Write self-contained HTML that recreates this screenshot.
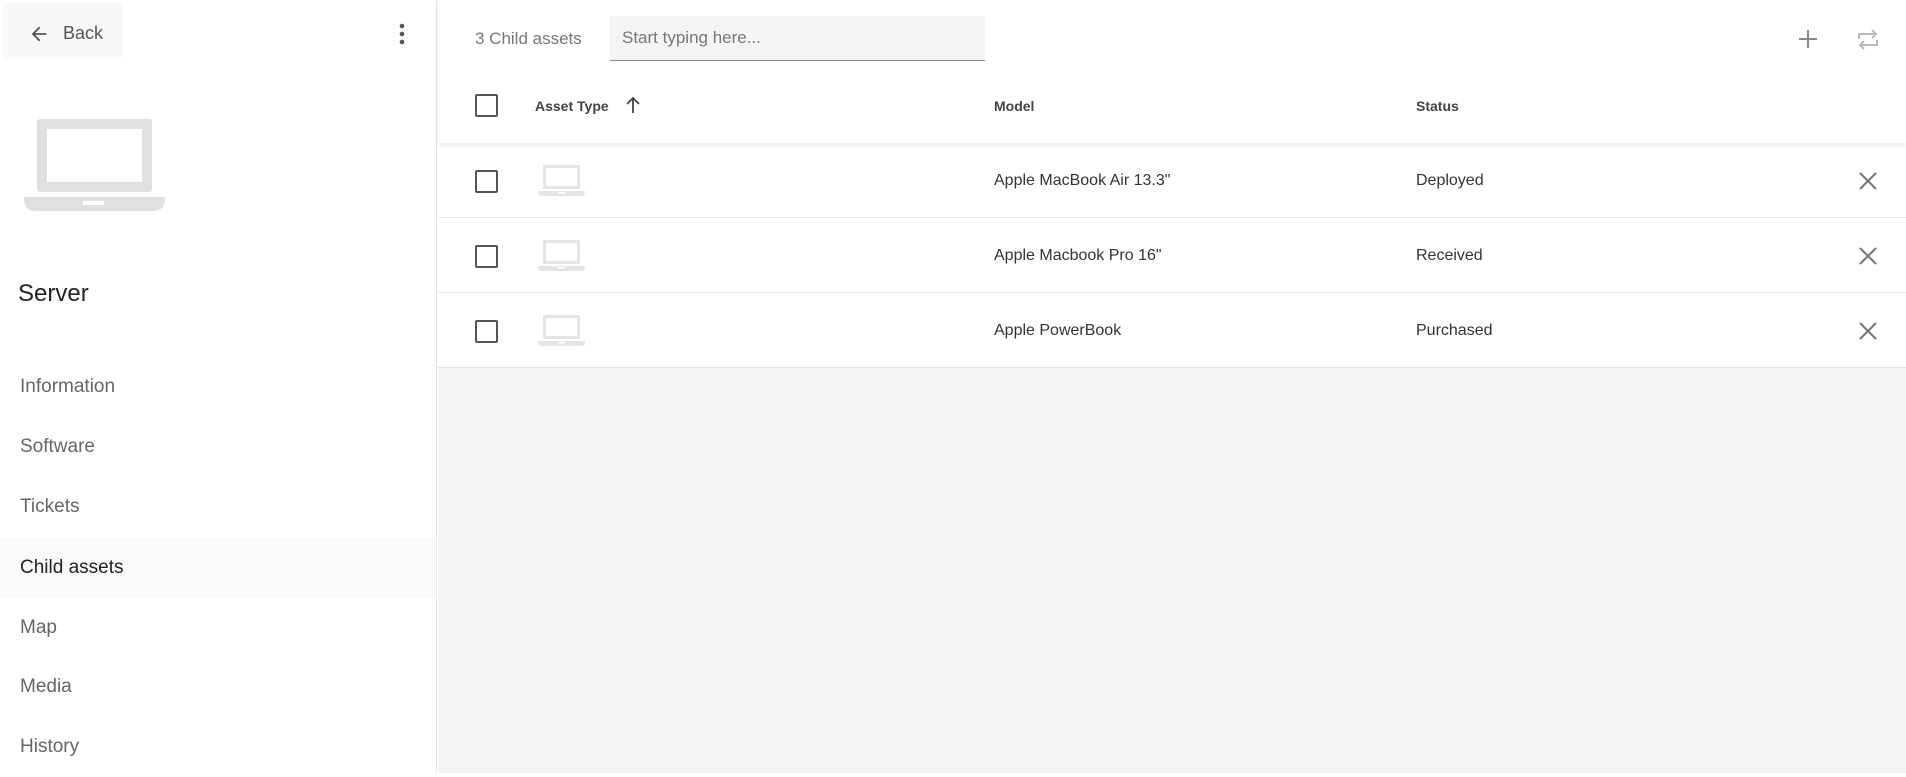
<!DOCTYPE html>
<html><head><meta charset="utf-8"><style>
*{box-sizing:border-box;margin:0;padding:0}
body{width:1906px;height:773px;overflow:hidden;font-family:"Liberation Sans",sans-serif;background:#fff;position:relative}
.side{position:absolute;left:0;top:0;width:437px;height:773px;background:#fff;border-right:1px solid #e6e6e6}
.back{position:absolute;left:3px;top:3px;width:120px;height:55px;background:#f8f8f8;border-radius:3px}
.back span{position:absolute;left:60px;top:20px;font-size:18px;color:#555}
.nav{position:absolute;left:0;width:436px;height:60px;font-size:19px;color:#666;padding-left:20px;line-height:60px}
.main{position:absolute;left:438px;top:0;width:1468px;height:773px;background:#f4f4f4}
.top{position:absolute;left:0;top:0;width:1468px;height:143px;background:#fff;box-shadow:0 3px 5px rgba(0,0,0,.08)}
.row{position:absolute;left:0;width:1468px;height:75px;background:#fff;border-bottom:1px solid #e4e4e4}
.cb{position:absolute;left:37px;width:23px;height:23px;border:2px solid #555;border-radius:2px}
.txt{position:absolute;font-size:16px;color:#333}
.hd{position:absolute;font-size:14px;font-weight:bold;color:#444;top:98px}
</style></head><body>
<div class="side">
 <div class="back">
  <svg style="position:absolute;left:25px;top:20px" width="22" height="22" viewBox="0 0 24 24"><path d="M20 11H7.8l5.6-5.6L12 4l-8 8 8 8 1.4-1.4L7.8 13H20z" fill="#555"/></svg>
  <span>Back</span>
 </div>
 <svg style="position:absolute;left:396px;top:22px" width="12" height="24" viewBox="0 0 12 24"><circle cx="6" cy="4" r="2.3" fill="#555"/><circle cx="6" cy="12" r="2.3" fill="#555"/><circle cx="6" cy="20" r="2.3" fill="#555"/></svg>
 <svg style="position:absolute;left:24px;top:119px" width="141" height="93" viewBox="0 0 141 93">
  <rect x="13" y="0" width="115" height="73" rx="3" fill="#e0e0e0"/>
  <rect x="23" y="10" width="95" height="53" fill="#fff"/>
  <path d="M0 78H141V80Q141 92 129 92H12Q0 92 0 80Z" fill="#e0e0e0"/>
  <rect x="59" y="82" width="21" height="4" fill="#fff"/>
 </svg>
 <div style="position:absolute;left:18px;top:280px;font-size:24px;color:#222">Server</div>
 <div class="nav" style="top:357px">Information</div>
 <div class="nav" style="top:417px">Software</div>
 <div class="nav" style="top:477px">Tickets</div>
 <div class="nav" style="top:538px;background:#f9f9f9;color:#222">Child assets</div>
 <div class="nav" style="top:598px">Map</div>
 <div class="nav" style="top:657px">Media</div>
 <div class="nav" style="top:717px">History</div>
</div>
<div class="main">
 <div class="row" style="top:143px"><div class="cb" style="top:27px"></div>
  <svg style="position:absolute;left:100px;top:22px" width="47" height="31" viewBox="0 0 47 31"><rect x="5" y="0" width="37" height="24" rx="1" fill="#e4e4e4"/><rect x="8" y="3" width="31" height="18" fill="#fff"/><path d="M0 26H47V27Q47 31 43 31H4Q0 31 0 27Z" fill="#e4e4e4"/><rect x="20" y="27" width="7" height="1.5" fill="#fff"/></svg>
  <div class="txt" style="left:556px;top:29px">Apple MacBook Air 13.3"</div>
  <div class="txt" style="left:978px;top:29px">Deployed</div>
  <svg style="position:absolute;left:1421px;top:29px" width="18" height="18" viewBox="0 0 18 18"><path d="M1 1L17 17M17 1L1 17" stroke="#777" stroke-width="2"/></svg>
 </div>
 <div class="row" style="top:218px"><div class="cb" style="top:27px"></div>
  <svg style="position:absolute;left:100px;top:22px" width="47" height="31" viewBox="0 0 47 31"><rect x="5" y="0" width="37" height="24" rx="1" fill="#e4e4e4"/><rect x="8" y="3" width="31" height="18" fill="#fff"/><path d="M0 26H47V27Q47 31 43 31H4Q0 31 0 27Z" fill="#e4e4e4"/><rect x="20" y="27" width="7" height="1.5" fill="#fff"/></svg>
  <div class="txt" style="left:556px;top:29px">Apple Macbook Pro 16"</div>
  <div class="txt" style="left:978px;top:29px">Received</div>
  <svg style="position:absolute;left:1421px;top:29px" width="18" height="18" viewBox="0 0 18 18"><path d="M1 1L17 17M17 1L1 17" stroke="#777" stroke-width="2"/></svg>
 </div>
 <div class="row" style="top:293px"><div class="cb" style="top:27px"></div>
  <svg style="position:absolute;left:100px;top:22px" width="47" height="31" viewBox="0 0 47 31"><rect x="5" y="0" width="37" height="24" rx="1" fill="#e4e4e4"/><rect x="8" y="3" width="31" height="18" fill="#fff"/><path d="M0 26H47V27Q47 31 43 31H4Q0 31 0 27Z" fill="#e4e4e4"/><rect x="20" y="27" width="7" height="1.5" fill="#fff"/></svg>
  <div class="txt" style="left:556px;top:29px">Apple PowerBook</div>
  <div class="txt" style="left:978px;top:29px">Purchased</div>
  <svg style="position:absolute;left:1421px;top:29px" width="18" height="18" viewBox="0 0 18 18"><path d="M1 1L17 17M17 1L1 17" stroke="#777" stroke-width="2"/></svg>
 </div>
 <div class="top">
  <div style="position:absolute;left:37px;top:29px;font-size:17px;color:#777">3 Child assets</div>
  <div style="position:absolute;left:172px;top:16px;width:375px;height:45px;background:#f4f4f4;border-bottom:1px solid #888"></div>
  <div style="position:absolute;left:184px;top:28px;font-size:17px;color:#777">Start typing here...</div>
  <svg style="position:absolute;left:1361px;top:30px" width="18" height="18" viewBox="0 0 18 18"><path d="M9 0V18M0 9H18" stroke="#888" stroke-width="2"/></svg>
  <svg style="position:absolute;left:1418px;top:27px" width="24" height="25" viewBox="0 0 24 25"><path d="M3 12V7H19M16 3L20 7L16 11M21 13V18H5M8 14L4 18L8 22" fill="none" stroke="#bbb" stroke-width="2"/></svg>
  <div class="cb" style="top:94px"></div>
  <div class="hd" style="left:97px">Asset Type</div>
  <svg style="position:absolute;left:187px;top:96px" width="16" height="18" viewBox="0 0 16 18"><path d="M8 17V2M2 8L8 2L14 8" fill="none" stroke="#444" stroke-width="1.8"/></svg>
  <div class="hd" style="left:556px">Model</div>
  <div class="hd" style="left:978px">Status</div>
 </div>
</div>
</body></html>
